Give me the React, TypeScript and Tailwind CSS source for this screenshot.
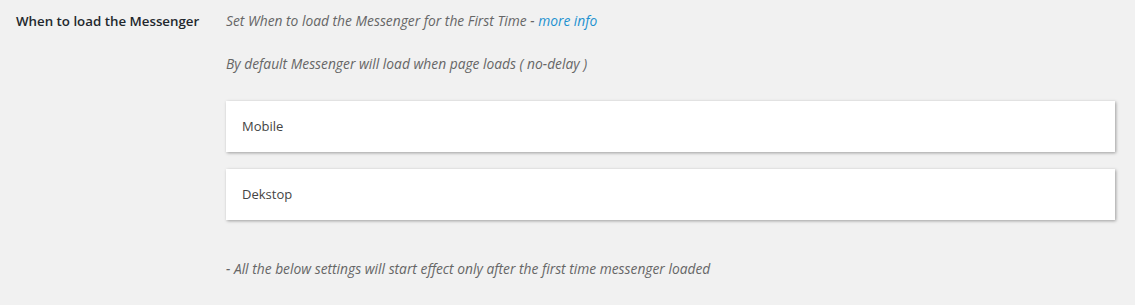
import React from "react";

export default function App() {
  const font = { fontFamily: '"Open Sans", "Noto Sans", sans-serif' };
  return (
    <div className="w-full h-[305px] bg-[#f1f1f1] flex pl-[16px] pr-[20px]" style={font}>
      <div className="w-[210px] shrink-0 pt-[11px]">
        <div className="text-[13.3px] leading-[20px] font-semibold text-[#23282d]">When to load the Messenger</div>
      </div>
      <div className="flex-1 flex flex-col pt-[11px]">
        <p className="text-[13.8px] leading-[20px] italic text-[#666]">
          Set When to load the Messenger for the First Time -{" "}
          <a className="text-[#1e91d0]">more info</a>
        </p>
        <p className="mt-[23px] text-[13.8px] leading-[20px] italic text-[#666]">
          By default Messenger will load when page loads ( no-delay )
        </p>
        <div className="mt-[27px] h-[51px] bg-white shadow-[1px_1px_3px_rgba(0,0,0,0.35)] flex items-center pl-[16px] text-[13px] text-[#444]">
          Mobile
        </div>
        <div className="mt-[17px] h-[51px] bg-white shadow-[1px_1px_3px_rgba(0,0,0,0.35)] flex items-center pl-[16px] text-[13px] text-[#444]">
          Dekstop
        </div>
        <p className="mt-[39px] text-[13.8px] leading-[20px] italic text-[#666]">
          - All the below settings will start effect only after the first time messenger loaded
        </p>
      </div>
    </div>
  );
}
